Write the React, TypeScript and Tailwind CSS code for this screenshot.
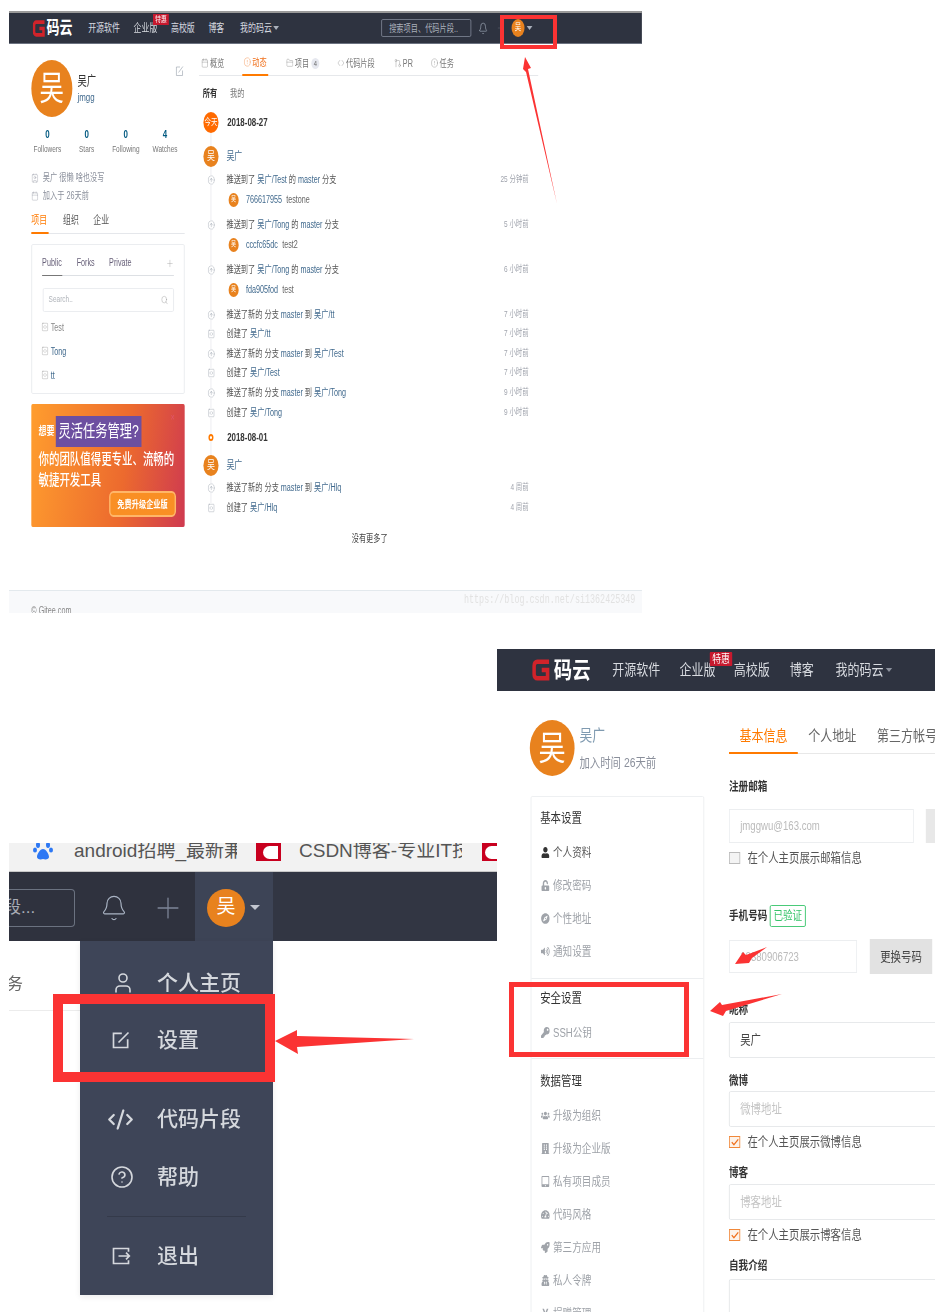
import React from "react";
import { Bell, Plus, User, Code, CodeXml, CircleHelp, Search, GitPullRequest, CircleAlert, Calendar, Contact, Check, CircleArrowUp, SquareCode, FolderClosed } from "lucide-react";
import { FaUser, FaUnlockAlt, FaCompass, FaVolumeUp, FaKey, FaUsers, FaBuilding, FaTabletAlt, FaTachometerAlt, FaRocket, FaUserSecret, FaYenSign } from "react-icons/fa";

const Logo = ({ w, h }: { w: number; h: number }) => (
  <svg width={w} height={h} viewBox="0 0 24 24" fill="none" className="shrink-0">
    <path d="M23 3H7a4.500 4.500 0 0 0-4.500 4.500v9A4.500 4.500 0 0 0 7 21h14V12h-8" stroke="#d1232a" strokeWidth="5" />
  </svg>
);

const EditIcon = ({ size, sw, cls }: { size: number; sw: number; cls?: string }) => (
  <svg width={size} height={size} viewBox="0 0 24 24" fill="none" stroke="currentColor" strokeWidth={sw} className={cls}>
    <path d="M13 4H3v17h17V11M9 15 21 3" />
  </svg>
);

const ExitIcon = ({ size, sw }: { size: number; sw: number }) => (
  <svg width={size} height={size} viewBox="0 0 24 24" fill="none" stroke="currentColor" strokeWidth={sw}>
    <path d="M21 7V3H3v18h18v-4M9 12h13m-4-4 4 4-4 4" />
  </svg>
);

const Caret = ({ c = "border-t-[#aab0bb]", s = "" }: { c?: string; s?: string }) => (
  <span className={`inline-block w-0 h-0 border-x-[4px] border-x-transparent border-t-[4px] ${c} ${s}`} />
);

const Av = ({ cls, text }: { cls: string; text: string }) => (
  <div className={`rounded-full bg-[#e8821e] text-white flex items-center justify-center shrink-0 ${cls}`}>{text}</div>
);

const L = ({ children }: { children: React.ReactNode }) => <span className="text-[#40698d]">{children}</span>;
const Push = ({ to }: { to: string }) => (
  <>推送到了 <L>吴广/{to}</L> 的 <L>master</L> 分支</>
);

const IconCell = ({ kind }: { kind: "push" | "create" }) => (
  <div className="w-[33px] flex justify-center shrink-0 text-[#9aa1ad]">
    {kind === "push" ? <CircleArrowUp size={10} strokeWidth={1.2} className="bg-white" /> : <SquareCode size={10} strokeWidth={1.2} className="bg-white" />}
  </div>
);

const Row = ({ mt, kind, time, children }: { mt: string; kind: "push" | "create"; time: string; children: React.ReactNode }) => (
  <div className={`relative flex items-center h-[19px] text-[10px] text-[#555] ${mt}`}>
    <IconCell kind={kind} />
    <div className="ml-[5px] flex-1 whitespace-nowrap">{children}</div>
    <div className="text-[9px] text-[#a0a4ad] whitespace-nowrap">{time}</div>
  </div>
);

const Commit = ({ mt, hash, msg }: { mt: string; hash: string; msg: string }) => (
  <div className={`relative flex items-center h-[19px] text-[10px] ${mt}`}>
    <div className="w-[41px] shrink-0" />
    <Av cls="w-[14px] h-[14px] text-[7px]" text="吴" />
    <span className="ml-[10px] text-[#40698d]">{hash}</span>
    <span className="ml-[6px] text-[#666]">{msg}</span>
  </div>
);

const DateRow = ({ mt, date, today }: { mt?: string; date: string; today?: boolean }) => (
  <div className={`relative flex items-center h-[19px] ${mt ?? ""}`}>
    <div className="w-[33px] flex justify-center shrink-0">
      {today ? (
        <div className="w-[21px] h-[21px] rounded-full bg-[#ff6a00] text-white text-[9px] flex items-center justify-center">今天</div>
      ) : (
        <div className="w-[7px] h-[7px] rounded-full bg-white border-2 border-[#ff7a00]" />
      )}
    </div>
    <div className="ml-[6px] text-[11px] font-bold text-[#333]">{date}</div>
  </div>
);

const UserRow = ({ mt }: { mt: string }) => (
  <div className={`relative flex items-center h-[19px] ${mt}`}>
    <div className="w-[33px] flex justify-center shrink-0">
      <Av cls="w-[21px] h-[21px] text-[11px]" text="吴" />
    </div>
    <div className="ml-[5px] text-[11px] text-[#40698d]">吴广</div>
  </div>
);

const TopPanel = () => (
  <div className="w-[633px] h-[602px] overflow-hidden blur-[0.4px]">
    <div className="w-[879px] h-[602px] scale-x-[0.72] origin-top-left relative flex flex-col">
      <div className="h-[33px] bg-[#2e3340] border-t-2 border-b border-t-[#9a9a9a] border-b-[#6b7280] flex items-center pl-[33px] text-[#d8dbe0] text-[11px] shrink-0">
        <Logo w={17} h={17} />
        <span className="ml-[2px] w-[36px] text-[18px] leading-none font-semibold text-white whitespace-nowrap">码云</span>
        <div className="ml-[22px] flex items-center gap-[19px]">
          <span>开源软件</span>
          <span className="relative">
            企业版
            <span className="absolute left-[27px] -top-[6px] w-[22px] h-[11px] bg-[#c7192e] text-white text-[8px] leading-[11px] text-center">特惠</span>
          </span>
          <span>高校版</span>
          <span className="mr-[3px]">博客</span>
          <span className="flex items-center gap-[2px]">我的码云<Caret s="border-x-[3px] border-t-[3px]" /></span>
        </div>
        <div className="ml-[142px] w-[125px] h-[18px] rounded-[2px] border border-[#7b8292] flex items-center pl-[10px] text-[10px] text-[#aab0bb]">搜索项目、代码片段..</div>
        <Bell size={13} strokeWidth={1.3} className="ml-[10px] text-[#aab4c4]" />
        <Plus size={12} strokeWidth={1} className="ml-[12px] text-[#6b7280]" />
        <Av cls="ml-[9px] w-[18px] h-[18px] text-[9px]" text="吴" />
        <Caret s="ml-[3px] border-x-[3px] border-t-[3px]" />
      </div>
      <div className="flex pl-[31px] flex-1">
        <div className="w-[213px] shrink-0 pt-[16px]">
          <div className="flex relative">
            <Av cls="w-[57px] h-[57px] text-[34px]" text="吴" />
            <div className="ml-[7px] pt-[13px]">
              <div className="text-[13px] leading-[16px] text-[#333]">吴广</div>
              <div className="text-[11px] leading-[14px] mt-[1px] text-[#40698d]">jmgg</div>
            </div>
            <EditIcon size={12} sw={1.3} cls="absolute right-[1px] top-[5px] text-[#8e96a3]" />
          </div>
          <div className="mt-[9px] -ml-[5px] w-[218px] grid grid-cols-4 text-center">
            {[["0", "Followers"], ["0", "Stars"], ["0", "Following"], ["4", "Watches"]].map(([n, l]) => (
              <div key={l}>
                <div className="text-[11px] leading-[16px] font-bold text-[#005980]">{n}</div>
                <div className="text-[9px] leading-[14px] text-[#777]">{l}</div>
              </div>
            ))}
          </div>
          <div className="mt-[15px] flex items-center text-[10px] leading-[14px] text-[#8a8f9b]"><Contact size={10} strokeWidth={1} /><span className="ml-[6px]">吴广 很懒 啥也没写</span></div>
          <div className="mt-[4px] flex items-center text-[10px] leading-[14px] text-[#8a8f9b]"><Calendar size={10} strokeWidth={1} /><span className="ml-[6px]">加入于 26天前</span></div>
          <div className="mt-[5px] flex gap-[20px] border-b border-[#e5e7eb] h-[26px] pt-[4px] text-[11px] text-[#555]">
            <span className="text-[#ff7a00] border-b-2 border-[#ff7a00] w-[24px] h-[22px]">项目</span>
            <span>组织</span>
            <span>企业</span>
          </div>
          <div className="mt-[10px] h-[150px] border border-[#e8eaed] rounded-[2px] px-[14px] relative">
            <div className="flex items-end h-[31px] border-b border-[#dde0e4] text-[10px] text-[#665f78] gap-[20px]">
              <span className="border-b border-[#777] pb-[5px] -mb-px w-[28px]">Public</span>
              <span className="pb-[5px]">Forks</span>
              <span className="pb-[5px]">Private</span>
              <Plus size={11} strokeWidth={1} className="ml-auto mb-[6px] text-[#999]" />
            </div>
            <div className="mt-[12px] ml-px h-[24px] border border-[#e8eaed] rounded-[2px] flex items-center justify-between px-[7px] text-[9px] text-[#b0b4ba]">
              Search..<Search size={10} strokeWidth={1} className="text-[#888]" />
            </div>
            <div className="mt-[3px] -ml-[1px] text-[10px]">
              {[["Test", "text-[#888]"], ["Tong", "text-[#40698d]"], ["tt", "text-[#40698d]"]].map(([t, c]) => (
                <div key={t} className={`flex items-center gap-[3px] h-[24px] ${c}`}><SquareCode size={10} strokeWidth={1} className="text-[#888]" />{t}</div>
              ))}
            </div>
          </div>
          <div className="mt-[10px] h-[123px] rounded-[2px] bg-[linear-gradient(100deg,#ff9d2e_0%,#ec6a2e_60%,#cf3a50_100%)] text-white relative pl-[10px] overflow-hidden">
            <div className="flex items-center pt-[12px] h-[43px]">
              <span className="text-[11px] font-bold">想要</span>
              <span className="ml-[2px] h-[31px] w-[119px] bg-[#6d4fa0] text-[17px] leading-[31px] whitespace-nowrap text-center">灵活任务管理?</span>
            </div>
            <div className="mt-[2px] text-[14.5px] leading-[21px] font-medium whitespace-nowrap">你的团队值得更专业、流畅的</div>
            <div className="text-[14.5px] leading-[21px] font-medium">敏捷开发工具</div>
            <div className="absolute right-[12px] bottom-[10px] w-[93px] h-[26px] rounded-[6px] bg-[#f98f24] border-2 border-[#ffb668] text-[10px] font-bold flex items-center justify-center whitespace-nowrap">免费升级企业版</div>
            <span className="absolute right-[14px] top-[6px] text-[10px] text-[#e0556a]">×</span>
          </div>
        </div>
        <div className="ml-[20px] w-[471px]">
          <div className="mt-[3px] h-[29px] pt-[4px] border-b border-[#e6e8eb] flex items-center gap-[25px] pl-[3px] text-[10px] text-[#777] whitespace-nowrap">
            <span className="flex items-center gap-[2px]"><Calendar size={10} strokeWidth={1} />概览</span>
            <span className="flex items-center gap-[2px] text-[#f0701c] h-[25px] border-b-2 border-[#ff7a00] px-[2px]"><CircleAlert size={10} strokeWidth={1} />动态</span>
            <span className="flex items-center gap-[2px]"><FolderClosed size={10} strokeWidth={1} />项目<span className="ml-[1px] w-[11px] h-[11px] rounded-full bg-[#e6e8ef] text-[8px] text-[#666] text-center leading-[11px]">4</span></span>
            <span className="flex items-center gap-[2px]"><Code size={10} strokeWidth={1} />代码片段</span>
            <span className="flex items-center gap-[2px] ml-[2px]"><GitPullRequest size={10} strokeWidth={1} />PR</span>
            <span className="flex items-center gap-[2px]"><CircleAlert size={10} strokeWidth={1} />任务</span>
          </div>
          <div className="mt-[11px] h-[14px] pl-[5px] flex gap-[18px] text-[10px] leading-[14px] text-[#777]"><span className="font-bold text-[#333]">所有</span><span>我的</span></div>
          <div className="relative mt-[12px] w-[458px]">
            <div className="absolute left-[16px] top-[10px] bottom-[8px] w-px bg-[#e5e7eb]" />
            <DateRow date="2018-08-27" today />
            <UserRow mt="mt-[15px]" />
            <Row mt="mt-[4px]" kind="push" time="25 分钟前"><Push to="Test" /></Row>
            <Commit mt="mt-px" hash="766617955" msg="testone" />
            <Row mt="mt-[6px]" kind="push" time="5 小时前"><Push to="Tong" /></Row>
            <Commit mt="mt-px" hash="cccfc65dc" msg="test2" />
            <Row mt="mt-[6px]" kind="push" time="6 小时前"><Push to="Tong" /></Row>
            <Commit mt="mt-px" hash="fda905fod" msg="test" />
            <Row mt="mt-[6px]" kind="push" time="7 小时前">推送了新的 分支 <L>master</L> 到 <L>吴广/tt</L></Row>
            <Row mt="mt-0" kind="create" time="7 小时前">创建了 <L>吴广/tt</L></Row>
            <Row mt="mt-px" kind="push" time="7 小时前">推送了新的 分支 <L>master</L> 到 <L>吴广/Test</L></Row>
            <Row mt="mt-0" kind="create" time="7 小时前">创建了 <L>吴广/Test</L></Row>
            <Row mt="mt-px" kind="push" time="9 小时前">推送了新的 分支 <L>master</L> 到 <L>吴广/Tong</L></Row>
            <Row mt="mt-px" kind="create" time="9 小时前">创建了 <L>吴广/Tong</L></Row>
            <DateRow mt="mt-[6px]" date="2018-08-01" />
            <UserRow mt="mt-[9px]" />
            <Row mt="mt-[3px]" kind="push" time="4 周前">推送了新的 分支 <L>master</L> 到 <L>吴广/Hlq</L></Row>
            <Row mt="mt-px" kind="create" time="4 周前">创建了 <L>吴广/Hlq</L></Row>
          </div>
          <div className="mt-[15px] w-[474px] text-center text-[10px] leading-[14px] text-[#444]">没有更多了</div>
        </div>
      </div>
      <div className="h-[23px] shrink-0 bg-[#f8f9fb] border-t border-[#e3e9ed] pl-[31px] pt-[13px] text-[10px] leading-[14px] text-[#888] flex justify-between overflow-hidden relative">
        <span>© Gitee.com</span>
      </div>
    </div>
  </div>
);

const DropItem = ({ mt, icon, pad, children }: { mt: string; icon: React.ReactNode; pad?: string; children: React.ReactNode }) => (
  <div className={`flex items-center ${mt}`}>
    <span className={`w-[50px] flex shrink-0 ${pad ?? "pl-[4px]"}`}>{icon}</span>
    {children}
  </div>
);

const LeftPanel = () => (
  <div className="w-[488px] mt-[194px] shrink-0 blur-[0.3px]">
    <div className="h-[29px] bg-[#f2f2f2] border-b border-[#c8c8c8] overflow-hidden flex items-start">
      <svg width="20" height="18" viewBox="0 0 20 18" className="ml-[24px] -mt-[1px] shrink-0" fill="#2d78f4">
        <ellipse cx="5" cy="3" rx="2" ry="3" /><ellipse cx="15" cy="3" rx="2" ry="3" /><ellipse cx="2" cy="8" rx="2" ry="2.5" /><ellipse cx="18" cy="8" rx="2" ry="2.5" /><path d="M10 7c-3 0-6 5-6 8 0 2 3 3 6 2 3 1 6 0 6-2 0-3-3-8-6-8z" />
      </svg>
      <span className="ml-[21px] -mt-[3px] w-[163px] shrink-0 text-[19px] leading-[22px] text-[#555] whitespace-nowrap overflow-hidden">android招聘_最新兼</span>
      <span className="ml-[19px] w-[25px] h-[18px] shrink-0 bg-[#c8001f] flex items-center justify-end pr-[3px]"><span className="w-[15px] h-[13px] rounded-l-full bg-white" /></span>
      <span className="ml-[18px] -mt-[3px] w-[163px] shrink-0 text-[19px] leading-[22px] text-[#555] whitespace-nowrap overflow-hidden">CSDN博客-专业IT技</span>
      <span className="ml-[20px] w-[15px] h-[18px] shrink-0 bg-[#c8001f] flex items-center pl-[3px]"><span className="w-[12px] h-[13px] rounded-l-full bg-white" /></span>
    </div>
    <div className="h-[69px] flex">
      <div className="w-[186px] bg-[#2f323e] flex items-center pt-[2px]">
        <div className="w-[66px] h-[38px] rounded-r-[4px] border border-l-0 border-[#6b7280] flex items-center overflow-hidden text-[17px] text-[#a8acb5] whitespace-nowrap"><span className="-ml-[5px]">段...</span></div>
        <Bell size={28} strokeWidth={1} className="ml-[25px] text-[#aab4c4]" />
        <Plus size={34} strokeWidth={0.9} className="ml-[23px] text-[#7d8598]" />
      </div>
      <div className="w-[78px] bg-[#3d4456] flex items-center pt-[2px]">
        <Av cls="ml-[12px] w-[38px] h-[38px] text-[19px]" text="吴" />
        <Caret c="border-t-[#c2c6cf]" s="ml-[5px] border-x-[5px] border-t-[5px]" />
      </div>
      <div className="flex-1 bg-[#323643]" />
    </div>
    <div className="flex">
      <div className="w-[71px] h-[70px] border-b border-[#ececec] overflow-hidden text-[17px] leading-[20px] text-[#666] pt-[34px] whitespace-nowrap"><span className="block -ml-[3px]">务</span></div>
      <div className="w-[193px] h-[354px] bg-[#3e4558] pl-[27px] pr-[27px] pt-[27px] text-[21px] leading-[30px] font-medium text-[#d5d8dd] shadow-[0_2px_6px_rgba(0,0,0,0.08)]">
        <DropItem mt="mt-0" icon={<User size={24} strokeWidth={1.6} />}>个人主页</DropItem>
        <DropItem mt="mt-[27px]" icon={<EditIcon size={20} sw={2} />}>设置</DropItem>
        <DropItem mt="mt-[49px]" pad="pl-0" icon={<CodeXml size={27} strokeWidth={2} />}>代码片段</DropItem>
        <DropItem mt="mt-[28px]" pad="pl-[3px]" icon={<CircleHelp size={24} strokeWidth={1.6} />}>帮助</DropItem>
        <div className="mt-[24px] h-px bg-[#343a4a]" />
        <DropItem mt="mt-[24px]" icon={<ExitIcon size={20} sw={2} />}>退出</DropItem>
      </div>
    </div>
  </div>
);

const MenuItem = ({ icon, text, muted = true }: { icon: React.ReactNode; text: string; muted?: boolean }) => (
  <div className={`h-[33px] flex items-center text-[12px] whitespace-nowrap ${muted ? "text-[#9ea2a8]" : "text-[#555]"}`}>
    <span className={`w-[13px] flex justify-center text-[11px] ${muted ? "text-[#a0a4aa]" : "text-[#333]"}`}>{icon}</span>
    <span className="ml-[3px]">{text}</span>
  </div>
);

const Section = ({ title, cls, children }: { title: string; cls: string; children: React.ReactNode }) => (
  <div className={`px-[11px] ${cls}`}>
    <div className="h-[20px] text-[13px] leading-[20px] text-[#333]">{title}</div>
    <div className="mt-[8px]">{children}</div>
  </div>
);

const FieldLabel = ({ cls, children }: { cls: string; children: React.ReactNode }) => (
  <div className={`h-[16px] text-[12px] leading-[16px] font-bold text-[#333] ${cls}`}>{children}</div>
);

const TextInput = ({ cls, text, dark }: { cls: string; text: string; dark?: boolean }) => (
  <div className={`w-[300px] border border-[#e4e6e9] rounded-[2px] flex items-center pl-[13px] text-[13px] ${dark ? "text-[#444]" : "text-[#c4c4c4]"} ${cls}`}>{text}</div>
);

const Check2 = ({ cls, on, text }: { cls: string; on?: boolean; text: string }) => (
  <div className={`h-[14px] flex items-center text-[13px] text-[#555] whitespace-nowrap ${cls}`}>
    {on ? (
      <span className="w-[14px] h-[12px] border border-[#f0883a] bg-[#fdf3ea] flex items-center justify-center"><Check size={11} strokeWidth={3} className="text-[#f0701c]" /></span>
    ) : (
      <span className="w-[14px] h-[12px] border border-[#bbb] bg-[#f4f4f4]" />
    )}
    <span className="ml-[9px]">{text}</span>
  </div>
);

const RightPanel = () => (
  <div className="w-[438px] h-[663px] overflow-hidden blur-[0.3px]">
    <div className="w-[548px] h-[663px] scale-x-[0.8] origin-top-left">
      <div className="h-[42px] bg-[#2e3340] flex items-center pl-[44px] text-[15px] text-[#d8dbe0] whitespace-nowrap">
        <Logo w={22} h={22} />
        <span className="ml-[5px] w-[46px] text-[23px] leading-none font-semibold text-white">码云</span>
        <div className="ml-[27px] flex items-center">
          <span>开源软件</span>
          <span className="relative ml-[24px]">
            企业版
            <span className="absolute left-[38px] -top-[7px] w-[28px] h-[14px] bg-[#c7192e] text-white text-[11px] leading-[14px] text-center rounded-[1px]">特惠</span>
          </span>
          <span className="ml-[23px]">高校版</span>
          <span className="ml-[25px]">博客</span>
          <span className="ml-[27px] flex items-center gap-[3px]">我的码云<Caret c="border-t-[#8a8f9b]" /></span>
        </div>
      </div>
      <div className="flex pl-[41px]">
        <div className="w-[218px] shrink-0 pt-[29px]">
          <div className="flex">
            <Av cls="w-[56px] h-[56px] text-[34px]" text="吴" />
            <div className="ml-[6px]">
              <div className="mt-[6px] text-[16px] leading-[20px] text-[#7f9ab0]">吴广</div>
              <div className="mt-[7px] text-[13px] leading-[20px] text-[#8a8f9b] whitespace-nowrap">加入时间 26天前</div>
            </div>
          </div>
          <div className="mt-[20px] ml-px w-[217px] border border-[#eceef0] rounded-[2px] h-[600px] pt-[11px]">
            <Section title="基本设置" cls="pb-[10px] border-b border-[#eceef0]">
              <MenuItem muted={false} icon={<FaUser />} text="个人资料" />
              <MenuItem icon={<FaUnlockAlt />} text="修改密码" />
              <MenuItem icon={<FaCompass />} text="个性地址" />
              <MenuItem icon={<FaVolumeUp />} text="通知设置" />
            </Section>
            <Section title="安全设置" cls="pt-[9px] pb-[9px] border-b border-[#eceef0]">
              <MenuItem icon={<FaKey />} text="SSH公钥" />
            </Section>
            <Section title="数据管理" cls="pt-[12px]">
              <MenuItem icon={<FaUsers />} text="升级为组织" />
              <MenuItem icon={<FaBuilding />} text="升级为企业版" />
              <MenuItem icon={<FaTabletAlt />} text="私有项目成员" />
              <MenuItem icon={<FaTachometerAlt />} text="代码风格" />
              <MenuItem icon={<FaRocket />} text="第三方应用" />
              <MenuItem icon={<FaUserSecret />} text="私人令牌" />
              <MenuItem icon={<FaYenSign />} text="捐赠管理" />
            </Section>
          </div>
        </div>
        <div className="ml-[31px] w-[320px] shrink-0 pt-[29px]">
          <div className="h-[34px] flex border-b border-[#e8e8e8] text-[15px] leading-[32px] text-[#666] whitespace-nowrap -mr-[40px]">
            <span className="px-[13px] h-[34px] text-[#ff7a00] border-b-2 border-[#ff7a00]">基本信息</span>
            <span className="px-[13px]">个人地址</span>
            <span className="px-[13px]">第三方帐号</span>
          </div>
          <FieldLabel cls="mt-[25px]">注册邮箱</FieldLabel>
          <div className="mt-[14px] flex">
            <div className="w-[231px] h-[34px] border border-[#eceef0] flex items-center pl-[13px] text-[12px] text-[#bbb]">jmggwu@163.com</div>
            <div className="ml-[15px] w-[40px] h-[34px] bg-[#e8e8e8]" />
          </div>
          <Check2 cls="mt-[8px]" text="在个人主页展示邮箱信息" />
          <div className="mt-[40px] flex items-center">
            <span className="text-[12px] font-bold text-[#333]">手机号码</span>
            <span className="ml-[3px] w-[45px] h-[22px] rounded-[2px] border border-[#35c46a] text-[12px] leading-[20px] text-center text-[#35c46a]">已验证</span>
          </div>
          <div className="mt-[12px] flex items-center">
            <div className="w-[160px] h-[33px] border border-[#eceef0] flex items-center pl-[13px] text-[12px] text-[#bbb]">18380906723</div>
            <div className="ml-[16px] w-[78px] h-[35px] bg-[#e2e2e2] text-[13px] text-[#444] flex items-center justify-center">更换号码</div>
          </div>
          <FieldLabel cls="mt-[28px]">昵称</FieldLabel>
          <TextInput cls="mt-[4px] h-[36px]" text="吴广" dark />
          <FieldLabel cls="mt-[15px]">微博</FieldLabel>
          <TextInput cls="mt-[2px] h-[36px]" text="微博地址" />
          <Check2 cls="mt-[8px]" on text="在个人主页展示微博信息" />
          <FieldLabel cls="mt-[16px]">博客</FieldLabel>
          <TextInput cls="mt-[3px] h-[36px]" text="博客地址" />
          <Check2 cls="mt-[8px]" on text="在个人主页展示博客信息" />
          <FieldLabel cls="mt-[16px]">自我介绍</FieldLabel>
          <div className="mt-[5px] w-[300px] h-[60px] border border-[#e4e6e9] rounded-[2px]" />
        </div>
      </div>
    </div>
  </div>
);

export default function App() {
  return (
    <div className="relative w-[935px] h-[1312px] overflow-hidden bg-white font-['Liberation_Sans','Noto_Sans_CJK_SC',sans-serif]">
      <div className="pt-[11px] pl-[9px]"><TopPanel /></div>
      <div className="mt-[36px] pl-[9px] flex items-start"><LeftPanel /><RightPanel /></div>

      <div className="absolute left-[464px] top-[592px] scale-x-[0.7] origin-left text-[12px] leading-[16px] font-['Liberation_Mono',monospace] text-[#e2e2e2] whitespace-nowrap">https://blog.csdn.net/si1362425349</div>

      <div className="absolute left-[500px] top-[15px] w-[57px] h-[34px] border-[4px] border-[#fb3333]" />
      <div className="absolute left-[53px] top-[994px] w-[222px] h-[88px] border-[10px] border-[#fb3333]" />
      <div className="absolute left-[509px] top-[982px] w-[180px] h-[75px] border-[5px] border-[#fb3333]" />
      <svg className="absolute left-0 top-0 pointer-events-none" width="935" height="1312" fill="#fb3333">
        <polygon points="525,57 531,68 528,69 557,204 526,72 523,69" />
        <polygon points="275,1041 297,1030 297,1036 414,1039 297,1047 298,1054" />
        <polygon points="710,1011 720,1002 722,1005 782,994 726,1011 723,1016" />
        <polygon points="735,964 743,952 746,955 767,947 752,958 749,963" />
      </svg>
    </div>
  );
}
